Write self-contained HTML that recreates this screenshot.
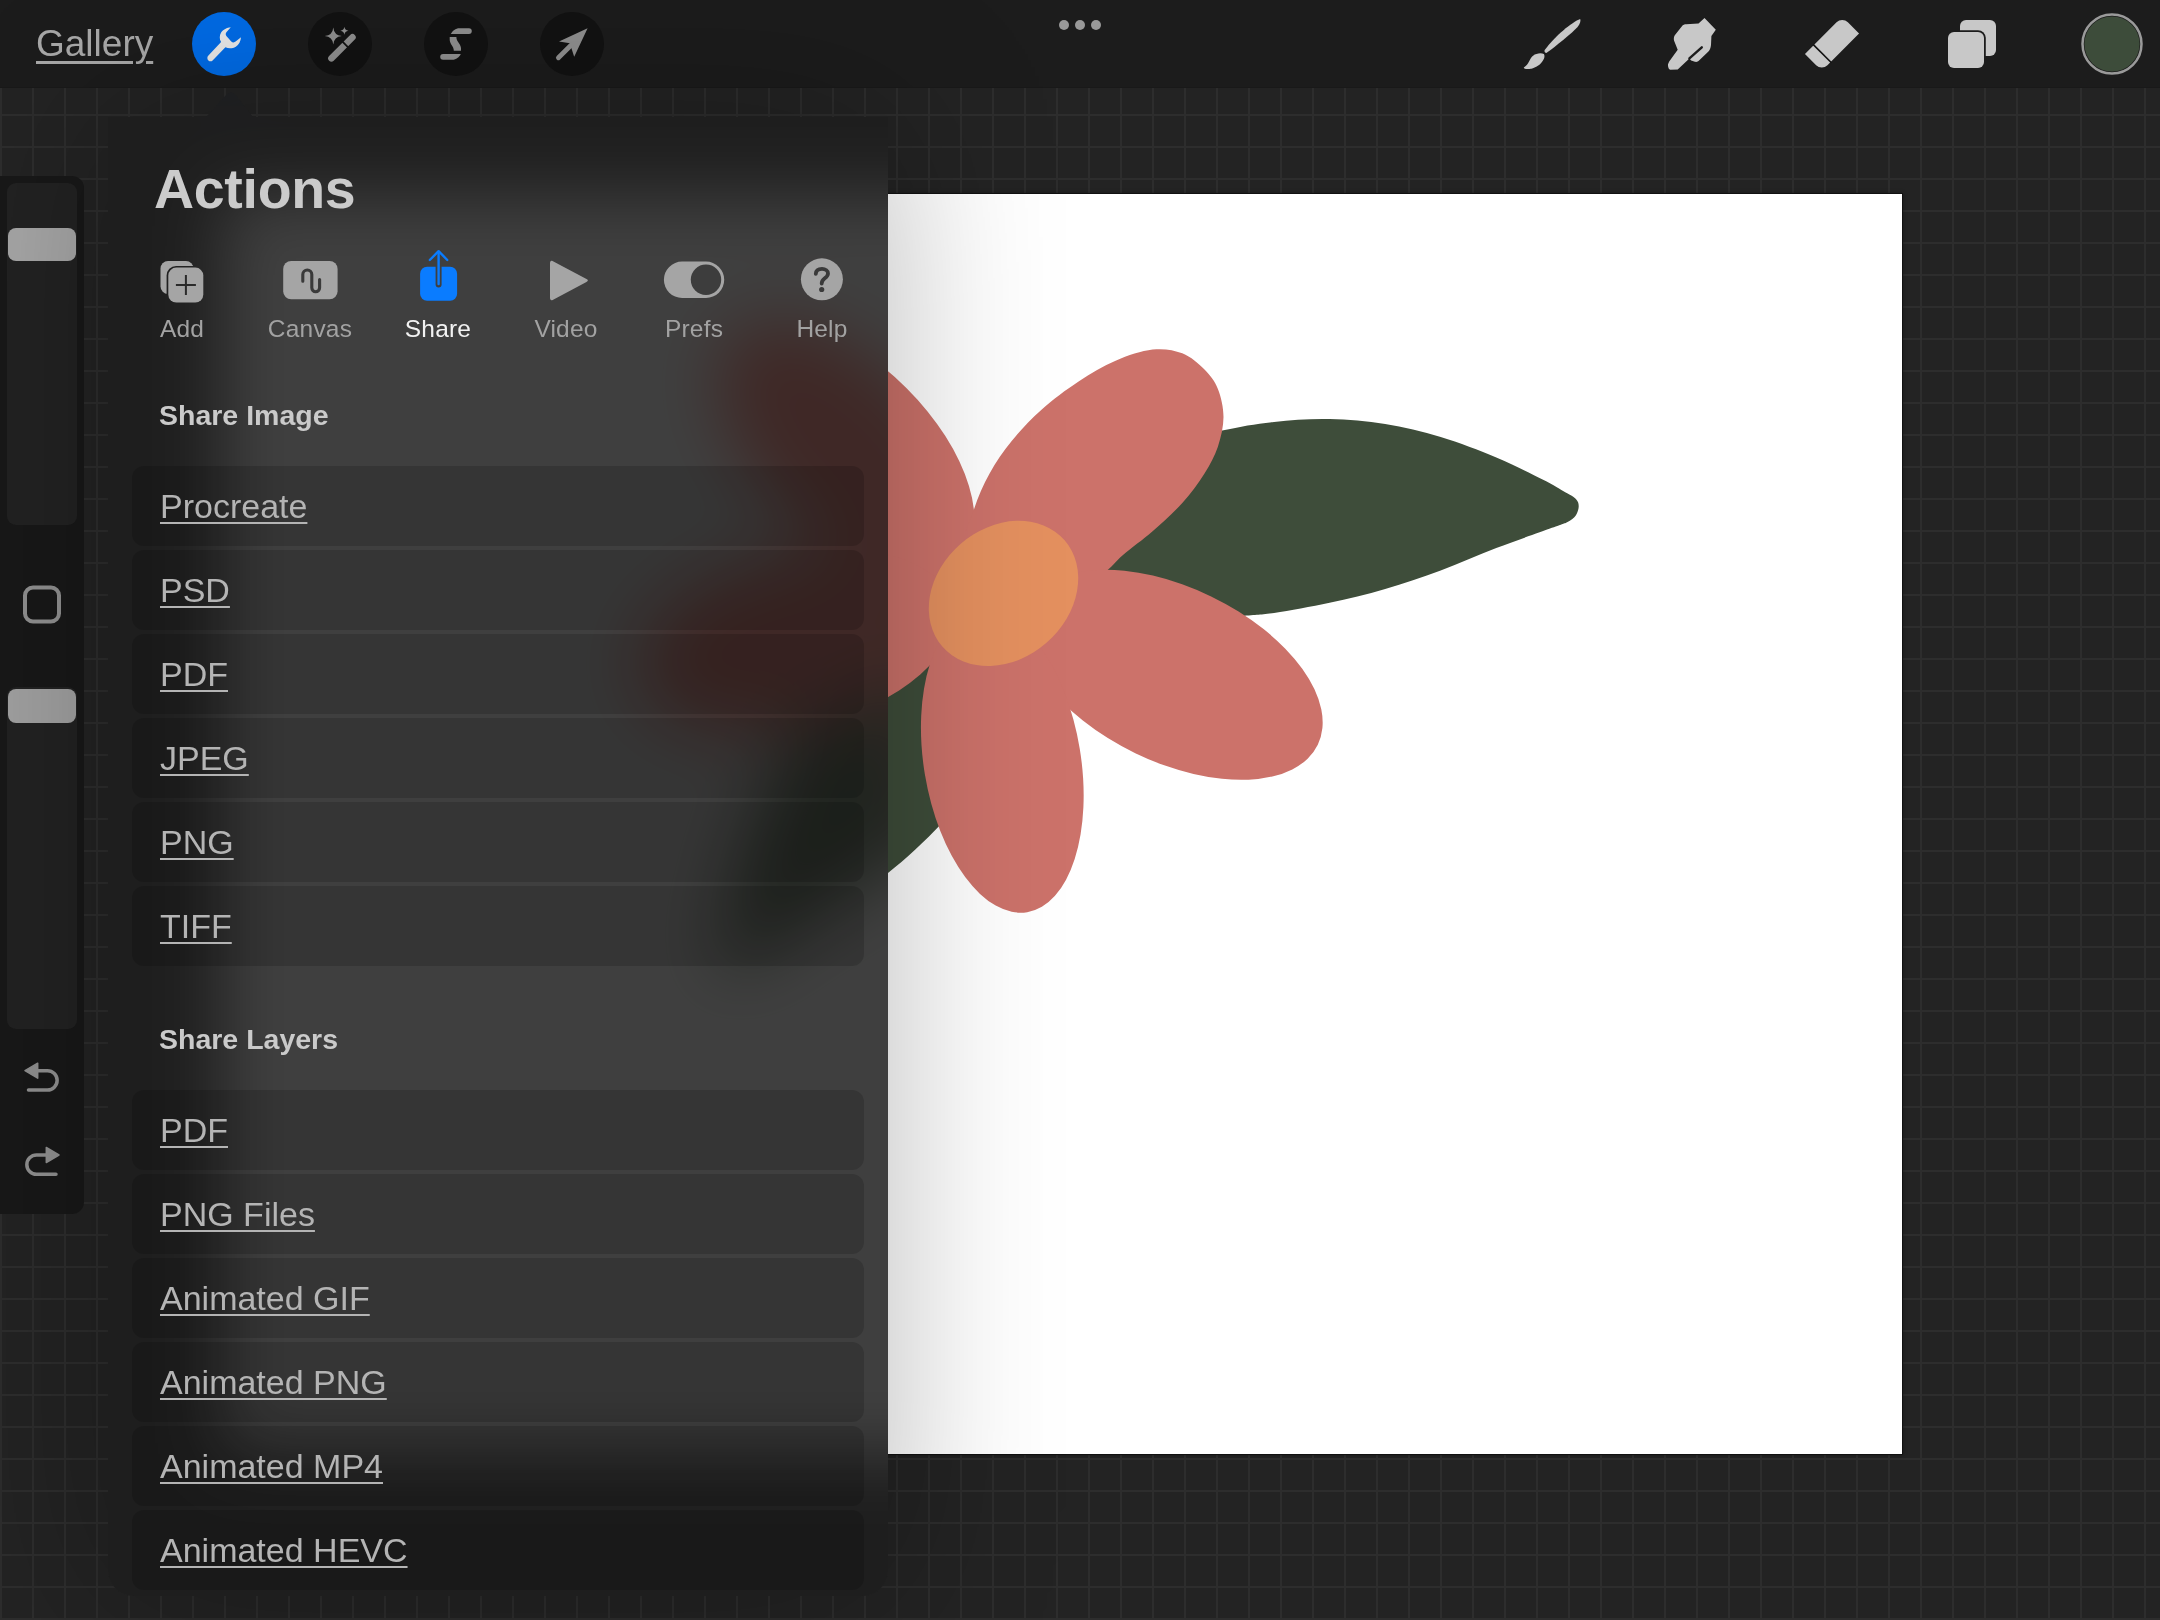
<!DOCTYPE html>
<html><head><meta charset="utf-8">
<style>
html,body{margin:0;padding:0;}
body{width:2160px;height:1620px;overflow:hidden;position:relative;background-color:#232323;
background-image:linear-gradient(to right,#2d2d2d 2px,transparent 2px),linear-gradient(to bottom,#2d2d2d 2px,transparent 2px);
background-size:32px 32px,32px 32px;background-position:0 0,0 18px;
font-family:"Liberation Sans",sans-serif;}
.abs{position:absolute;}
#toolbar,#panel{will-change:transform;}
#toolbar{left:0;top:0;width:2160px;height:87px;background:#1c1c1c;border-bottom:1px solid #191919;}
#canvas{left:222px;top:194px;width:1680px;height:1260px;background:#fff;box-shadow:0 0 0 1px #111,0 0 4px 1px rgba(0,0,0,0.35);overflow:hidden;}
#sidebar{left:0;top:176px;width:84px;height:1038px;background:#181818;border-radius:0 12px 12px 0;}
#panel{left:108px;top:91px;width:780px;height:1505px;overflow:hidden;border-radius:0 0 26px 26px;clip-path:polygon(0 26px,98px 26px,119px 3px,123px 1px,127px 3px,145px 26px,780px 26px,780px 100%,0 100%);}
#pshadow{left:108px;top:117px;width:780px;height:1479px;border-radius:0 0 26px 26px;box-shadow:0 0 170px rgba(0,0,0,0.28);}
#blur{left:-108px;top:-91px;width:2160px;height:1620px;filter:blur(34px) saturate(1.7);}
#ovl{left:0;top:0;width:780px;height:1505px;background:rgba(29,29,29,0.85);}
.row{position:absolute;left:24px;width:732px;height:80px;border-radius:12px;background:rgba(0,0,0,0.155);}
.row span{position:absolute;left:28px;top:0;line-height:80px;font-size:34px;color:#b4b4b4;text-decoration:underline;text-decoration-thickness:2px;text-underline-offset:4px;white-space:nowrap;}
.hdr{position:absolute;left:51px;font-size:28.5px;font-weight:700;color:#cacaca;white-space:nowrap;line-height:34px;}
.lbl{position:absolute;top:198px;width:140px;text-align:center;font-size:24.5px;letter-spacing:0.2px;color:#a2a2a2;line-height:28px;}
</style></head><body>

<div id="toolbar" class="abs">
  <div class="abs" style="left:36px;top:22px;font-size:37px;line-height:44px;color:#a8a8a8;text-decoration:underline;text-decoration-thickness:3px;text-underline-offset:5px;">Gallery</div>
  <svg class="abs" style="left:0;top:0" width="2160" height="88" viewBox="0 0 2160 88">
    <circle cx="224" cy="44" r="32" fill="#006be6"/>
    <circle cx="340" cy="44" r="32" fill="#121212"/>
    <circle cx="456" cy="44" r="32" fill="#121212"/>
    <circle cx="572" cy="44" r="32" fill="#121212"/>
    <!-- wrench -->
    <g transform="translate(192 12)" fill="#e8e8e8">
      <path d="M38.8,15.3 C35,15.5 31,17.8 29.1,20.5 C27.4,23.2 27.2,27 29.1,30 L16.2,43.8 C15,45 15.1,47.3 16.4,48.5 C17.7,49.7 19.6,49.6 20.6,48.5 L33.4,35.2 C36.5,36.7 40.5,36.6 43.8,34.7 C46.9,32.8 48.8,29 49,25.2 L43.6,29.6 C42.2,30.8 40.4,30.6 39.3,29.4 L34.6,24.3 C33.4,23 33.5,21.2 34.6,20 Z"/>
    </g>
    <!-- magic wand -->
    <g transform="translate(308 12)" fill="#8f8f8f">
      <line x1="23.4" y1="46.4" x2="44.5" y2="25.2" stroke="#8f8f8f" stroke-width="6.5" stroke-linecap="round"/>
      <line x1="33.5" y1="28.6" x2="41.4" y2="36.6" stroke="#121212" stroke-width="1.8"/>
      <path d="M25.3,15.6 Q26,23.4 33.8,24.1 Q26,24.8 25.3,32.6 Q24.6,24.8 16.8,24.1 Q24.6,23.4 25.3,15.6 Z"/>
      <path d="M36.4,14.7 Q36.8,18.3 40.4,18.7 Q36.8,19.1 36.4,22.7 Q36,19.1 32.4,18.7 Q36,18.3 36.4,14.7 Z"/>
    </g>
    <!-- selection S -->
    <g transform="translate(424 12)" fill="#8f8f8f">
      <path d="M26.8,22 C28.5,18.8 31.5,16.2 35.5,16.2 L44.9,16.2 A2.9,2.9 0 0 1 44.9,22 Z"/>
      <path d="M25.7,25 L32.4,25 C32.2,29.5 36.6,31.5 37,36 L37,38.8 L29.8,38.8 C30,34.5 25.6,32 25.7,27.5 Z"/>
      <path d="M36.8,41.9 C35.2,45 32.2,47.7 28.2,47.7 L19.1,47.7 A2.9,2.9 0 0 1 19.1,41.9 Z"/>
    </g>
    <!-- transform arrow -->
    <g transform="translate(540 12)" fill="#8f8f8f">
      <path d="M47.6,16.2 L19,29.5 L29.8,31.3 L34.2,44.7 Z"/>
      <line x1="18.4" y1="45.8" x2="31" y2="33.3" stroke="#8f8f8f" stroke-width="4.8" stroke-linecap="round"/>
    </g>
    <!-- dots -->
    <circle cx="1064" cy="25" r="5" fill="#999"/>
    <circle cx="1080" cy="25" r="5" fill="#999"/>
    <circle cx="1096" cy="25" r="5" fill="#999"/>
    <!-- brush -->
    <g fill="#c8c8c8">
      <path d="M1580.2,19 C1572,22 1555,36 1544.7,50.1 C1544,51.5 1545,53.2 1546.3,52.9 C1556,46 1572,33 1577.6,26.9 C1580,24 1581,20.5 1580.2,19 Z"/>
      <path d="M1543.9,54.1 C1541,52.6 1536,53.5 1533.1,55.7 C1530.6,57.6 1529.5,61 1528.2,63 C1527,65.3 1525,66.5 1523.8,67.4 C1523.5,68.6 1526,69.2 1527.5,69.1 C1531,69 1538,67.5 1542.3,61.4 C1544.5,58.5 1545,56 1543.9,54.1 Z"/>
    </g>
    <!-- smudge -->
    <g>
      <path fill="#c8c8c8" d="M1704.5,18 L1715.8,29.7 L1711.4,36.1 L1711,44.9 C1710.6,48 1709.8,50 1708.2,51.7 L1698.5,61 C1697,62 1696,62 1694.9,61.8 L1691.1,60.4 L1689.4,58.4 L1677.7,69.4 L1670.4,69.8 C1668.5,69.5 1667.8,66 1668,64.2 L1669.2,61.4 L1677.7,49.7 L1674,40.5 C1673.6,38.5 1674,36.5 1674.8,35.3 L1682.5,25.6 C1683.5,24.6 1685,24.2 1686.1,24.2 L1698.5,23.6 Z"/>
      <line x1="1689.4" y1="58.4" x2="1701.8" y2="47.3" stroke="#1c1c1c" stroke-width="2.4" stroke-linecap="round"/>
    </g>
    <!-- eraser -->
    <g transform="translate(1832 43.75) rotate(-45)">
      <path fill="#c8c8c8" d="M-26.35,-11.9 L18.35,-11.9 A8,8 0 0 1 26.35,-3.9 L26.35,11.9 L-18.35,11.9 A8,8 0 0 1 -26.35,3.9 Z"/>
      <line x1="-13.8" y1="-13" x2="-13.8" y2="13" stroke="#121212" stroke-width="1.6"/>
    </g>
    <!-- layers -->
    <mask id="laym"><rect x="1940" y="10" width="70" height="70" fill="#fff"/><rect x="1946.2" y="30.2" width="39.6" height="39.6" rx="7.8" fill="#000"/></mask>
    <rect x="1960" y="20" width="36" height="36" rx="6" fill="#c8c8c8" mask="url(#laym)"/>
    <rect x="1948" y="32" width="36" height="36" rx="6" fill="#c8c8c8"/>
    <!-- color -->
    <circle cx="2112" cy="44" r="29.5" fill="none" stroke="#9a9a9a" stroke-width="2.5"/>
    <circle cx="2112" cy="44" r="27.6" fill="#3d4c3a"/>
  </svg>
</div>

<div id="canvas" class="abs"><svg class="abs" style="left:0;top:0" width="1680" height="1260" viewBox="222 194 1680 1260"><defs><linearGradient id="cgrad" x1="0" y1="0" x2="1" y2="0"><stop offset="0" stop-color="#d7845a"/><stop offset="1" stop-color="#e58f60"/></linearGradient></defs><g>
<path fill="#3e4d3a" d="M1222.2,430.6 C1241.2,426.2 1256.2,423.8 1274.1,421.9 C1292.0,419.9 1311.1,418.7 1329.6,419.1 C1348.1,419.4 1366.7,421.1 1385.2,424.1 C1403.7,427.1 1422.2,431.5 1440.7,437.0 C1459.3,442.6 1479.3,450.3 1496.3,457.4 C1513.3,464.5 1531.0,473.8 1542.6,479.6 C1554.2,485.5 1560.2,489.4 1565.7,492.6 C1571.3,495.8 1573.8,496.8 1575.9,499.1 C1578.1,501.4 1578.8,503.7 1578.7,506.5 C1578.6,509.3 1577.4,513.2 1575.6,515.7 C1573.7,518.3 1571.5,519.8 1567.6,521.9 C1563.6,523.9 1563.7,523.4 1551.9,527.8 C1540.0,532.2 1514.8,541.0 1496.3,548.1 C1477.8,555.2 1459.3,563.6 1440.7,570.4 C1422.2,577.2 1403.7,583.5 1385.2,588.9 C1366.7,594.3 1348.1,598.8 1329.6,602.8 C1311.1,606.8 1289.5,610.6 1274.1,613.0 C1258.6,615.3 1257.7,614.2 1237.0,616.7 C1216.4,619.2 1179.5,625.8 1150.0,628.0 C1120.5,630.2 1080.0,638.0 1060.0,630.0 C1040.0,622.0 1026.7,600.8 1030.0,580.0 C1033.3,559.2 1058.3,527.0 1080.0,505.0 C1101.7,483.0 1136.3,460.4 1160.0,448.0 C1183.7,435.6 1203.2,434.9 1222.2,430.6 Z"/>
<path fill="#3e4d3a" d="M1010,610 C940,630 880,650 830,695 C780,745 740,830 722,955 C718,972 730,976 744,966 C800,925 850,895 888,873 C930,840 975,790 1010,740 Z"/>
<g fill="#cc726a">
<circle cx="1003" cy="593" r="80"/>
<ellipse cx="845.9" cy="449.1" rx="160" ry="86" transform="rotate(-135.1 845.9 449.1)"/>
<ellipse cx="796.4" cy="640.7" rx="160" ry="86" transform="rotate(167 796.4 640.7)"/>
<path d="M974.1,508.9 C978.2,496.2 983.3,484.7 989.6,473.4 C995.9,462.0 1003.2,451.4 1011.9,440.8 C1020.5,430.2 1030.4,419.5 1041.5,409.7 C1052.6,399.8 1066.2,389.6 1078.6,381.5 C1090.9,373.3 1103.3,366.1 1115.6,360.7 C1128.0,355.4 1141.5,350.9 1152.6,349.6 C1163.8,348.4 1173.6,350.0 1182.3,353.3 C1190.9,356.7 1198.6,363.7 1204.5,369.6 C1210.4,375.6 1214.7,381.0 1217.9,388.9 C1221.0,396.8 1223.5,407.4 1223.5,417.1 C1223.5,426.7 1221.0,437.3 1217.9,446.7 C1214.7,456.1 1210.4,464.0 1204.5,473.4 C1198.6,482.8 1190.9,493.4 1182.3,503.0 C1173.6,512.6 1162.5,522.5 1152.6,531.2 C1142.8,539.8 1131.4,547.7 1123.0,554.9 C1114.6,562.0 1112.8,566.6 1102.3,574.1 C1091.8,581.7 1077.0,597.4 1060.0,600.0 C1043.0,602.6 1015.8,598.3 1000.0,590.0 C984.2,581.7 969.3,563.5 965.0,550.0 C960.7,536.5 970.0,521.7 974.1,508.9 Z"/>
<ellipse cx="1173.2" cy="674.8" rx="160.6" ry="87.1" transform="rotate(25.8 1173.2 674.8)"/>
<ellipse cx="1002.3" cy="761.5" rx="152.7" ry="78.5" transform="rotate(80.6 1002.3 761.5)"/>
</g>
<ellipse cx="1003.5" cy="593.4" rx="81" ry="65.5" transform="rotate(-41 1003.5 593.4)" fill="#e4905f"/>
</g></svg></div>

<div id="sidebar" class="abs">
  <svg class="abs" style="left:0;top:0" width="84" height="1038" viewBox="0 176 84 1038">
    <rect x="7" y="183" width="70" height="342" rx="9" fill="#222"/>
    <rect x="8" y="228" width="68" height="33" rx="8" fill="#a6a6a6"/>
    <rect x="25" y="587.5" width="34" height="34" rx="8" fill="none" stroke="#8f8f8f" stroke-width="4"/>
    <rect x="7" y="687" width="70" height="342" rx="9" fill="#222"/>
    <rect x="8" y="689" width="68" height="34" rx="8" fill="#a0a0a0"/>
    <g fill="none" stroke="#8f8f8f" stroke-width="3.5" stroke-linecap="round">
      <path d="M28.5,1090 L47.5,1090 A9.65,9.65 0 0 0 47.5,1070.7 L36,1070.7"/>
      <path d="M56,1174.3 L36.5,1174.3 A9.65,9.65 0 0 1 36.5,1155 L48,1155"/>
    </g>
    <g fill="#8f8f8f">
      <path d="M25,1070.7 L37.7,1063.2 L37.7,1078.2 Z" stroke="#8f8f8f" stroke-width="1.5" stroke-linejoin="round"/>
      <path d="M59,1155 L46.3,1147.5 L46.3,1162.5 Z" stroke="#8f8f8f" stroke-width="1.5" stroke-linejoin="round"/>
    </g>
  </svg>
</div>

<div id="pshadow" class="abs"></div>
<div id="panel" class="abs">
  <div id="blur" class="abs"><div class="abs" style="left:-200px;top:-200px;width:2560px;height:2020px;background:#252525"></div><div class="abs" style="left:-200px;top:-200px;width:2560px;height:288px;background:#1c1c1c"></div>
<div class="abs" style="left:192px;top:12px;width:64px;height:64px;border-radius:50%;background:#1d3d66"></div>
<div class="abs" style="left:0;top:176px;width:84px;height:1038px;background:#181818"></div>
<svg class="abs" style="left:0;top:0" width="2160" height="1620" viewBox="0 0 2160 1620"><defs><linearGradient id="cgradb" x1="0" y1="0" x2="1" y2="0"><stop offset="0" stop-color="#d7845a"/><stop offset="1" stop-color="#e58f60"/></linearGradient></defs>
<rect x="222" y="194" width="1680" height="1260" fill="#fff"/>
<g>
<path fill="#3e4d3a" d="M1222.2,430.6 C1241.2,426.2 1256.2,423.8 1274.1,421.9 C1292.0,419.9 1311.1,418.7 1329.6,419.1 C1348.1,419.4 1366.7,421.1 1385.2,424.1 C1403.7,427.1 1422.2,431.5 1440.7,437.0 C1459.3,442.6 1479.3,450.3 1496.3,457.4 C1513.3,464.5 1531.0,473.8 1542.6,479.6 C1554.2,485.5 1560.2,489.4 1565.7,492.6 C1571.3,495.8 1573.8,496.8 1575.9,499.1 C1578.1,501.4 1578.8,503.7 1578.7,506.5 C1578.6,509.3 1577.4,513.2 1575.6,515.7 C1573.7,518.3 1571.5,519.8 1567.6,521.9 C1563.6,523.9 1563.7,523.4 1551.9,527.8 C1540.0,532.2 1514.8,541.0 1496.3,548.1 C1477.8,555.2 1459.3,563.6 1440.7,570.4 C1422.2,577.2 1403.7,583.5 1385.2,588.9 C1366.7,594.3 1348.1,598.8 1329.6,602.8 C1311.1,606.8 1289.5,610.6 1274.1,613.0 C1258.6,615.3 1257.7,614.2 1237.0,616.7 C1216.4,619.2 1179.5,625.8 1150.0,628.0 C1120.5,630.2 1080.0,638.0 1060.0,630.0 C1040.0,622.0 1026.7,600.8 1030.0,580.0 C1033.3,559.2 1058.3,527.0 1080.0,505.0 C1101.7,483.0 1136.3,460.4 1160.0,448.0 C1183.7,435.6 1203.2,434.9 1222.2,430.6 Z"/>
<path fill="#3e4d3a" d="M1010,610 C940,630 880,650 830,695 C780,745 740,830 722,955 C718,972 730,976 744,966 C800,925 850,895 888,873 C930,840 975,790 1010,740 Z"/>
<g fill="#cc726a">
<circle cx="1003" cy="593" r="80"/>
<ellipse cx="845.9" cy="449.1" rx="160" ry="86" transform="rotate(-135.1 845.9 449.1)"/>
<ellipse cx="796.4" cy="640.7" rx="160" ry="86" transform="rotate(167 796.4 640.7)"/>
<path d="M974.1,508.9 C978.2,496.2 983.3,484.7 989.6,473.4 C995.9,462.0 1003.2,451.4 1011.9,440.8 C1020.5,430.2 1030.4,419.5 1041.5,409.7 C1052.6,399.8 1066.2,389.6 1078.6,381.5 C1090.9,373.3 1103.3,366.1 1115.6,360.7 C1128.0,355.4 1141.5,350.9 1152.6,349.6 C1163.8,348.4 1173.6,350.0 1182.3,353.3 C1190.9,356.7 1198.6,363.7 1204.5,369.6 C1210.4,375.6 1214.7,381.0 1217.9,388.9 C1221.0,396.8 1223.5,407.4 1223.5,417.1 C1223.5,426.7 1221.0,437.3 1217.9,446.7 C1214.7,456.1 1210.4,464.0 1204.5,473.4 C1198.6,482.8 1190.9,493.4 1182.3,503.0 C1173.6,512.6 1162.5,522.5 1152.6,531.2 C1142.8,539.8 1131.4,547.7 1123.0,554.9 C1114.6,562.0 1112.8,566.6 1102.3,574.1 C1091.8,581.7 1077.0,597.4 1060.0,600.0 C1043.0,602.6 1015.8,598.3 1000.0,590.0 C984.2,581.7 969.3,563.5 965.0,550.0 C960.7,536.5 970.0,521.7 974.1,508.9 Z"/>
<ellipse cx="1173.2" cy="674.8" rx="160.6" ry="87.1" transform="rotate(25.8 1173.2 674.8)"/>
<ellipse cx="1002.3" cy="761.5" rx="152.7" ry="78.5" transform="rotate(80.6 1002.3 761.5)"/>
</g>
<ellipse cx="1003.5" cy="593.4" rx="81" ry="65.5" transform="rotate(-41 1003.5 593.4)" fill="#e4905f"/>
</g></svg></div>
  <div id="ovl" class="abs"></div>
  <div class="abs" style="left:0;top:26px;width:780px;height:1477px;">
  <div class="abs" style="left:46px;top:42px;font-size:55.5px;font-weight:700;color:#cbcbcb;line-height:60px;letter-spacing:-0.3px;">Actions</div>
  <svg class="abs" style="left:0;top:0" width="780" height="230" viewBox="108 117 780 230">
    <!-- Add -->
    <g>
      <mask id="addm"><rect x="150" y="250" width="70" height="70" fill="#fff"/><rect x="166.6" y="265.9" width="38.4" height="38.4" rx="9.5" fill="#000"/></mask>
      <rect x="160.5" y="261" width="33" height="33" rx="7.5" fill="#a5a5a5" mask="url(#addm)"/>
      <rect x="168.3" y="267.6" width="35" height="35" rx="8" fill="#a5a5a5"/>
      <path d="M175.9,285 H195.9 M185.9,275 V295" stroke="#2a2a2a" stroke-width="2" fill="none"/>
    </g>
    <!-- Canvas -->
    <g>
      <rect x="283.2" y="261" width="54.4" height="38.3" rx="8" fill="#a5a5a5"/>
      <path d="M302.8,281.2 V274.5 A4.5,4.5 0 0 1 311.8,274.5 V287.8 A3.9,3.9 0 0 0 319.6,287.8 V279.5" stroke="#3a3a3a" stroke-width="3.1" fill="none" stroke-linecap="round"/>
    </g>
    <!-- Share -->
    <g>
      <mask id="shm"><rect x="400" y="240" width="80" height="80" fill="#fff"/><line x1="438.6" y1="240" x2="438.6" y2="284.5" stroke="#000" stroke-width="6" stroke-linecap="round"/></mask>
      <rect x="420.1" y="266.7" width="37" height="34.1" rx="7" fill="#0a7cff" mask="url(#shm)"/>
      <line x1="438.6" y1="252" x2="438.6" y2="284" stroke="#0a7cff" stroke-width="2.4" stroke-linecap="round"/>
      <path d="M429.8,260 L438.6,251.2 L447.3,260" stroke="#0a7cff" stroke-width="2.4" fill="none" stroke-linecap="round" stroke-linejoin="round"/>
    </g>
    <!-- Video -->
    <path d="M552.5,261 C550.8,260.2 550,261.5 550,263.5 V297.8 C550,299.8 551,300.9 552.7,300 L586,282.3 C588.5,281 588.5,280 586,278.8 Z" fill="#a5a5a5"/>
    <!-- Prefs -->
    <rect x="663.9" y="261.6" width="60.3" height="36.4" rx="18.2" fill="#a5a5a5"/>
    <circle cx="706" cy="279.8" r="15.2" fill="#3d3d3d"/>
    <!-- Help -->
    <circle cx="821.9" cy="279.3" r="21" fill="#a5a5a5"/>
    <path d="M815.8,273.9 C816,270.6 818.5,268.9 822,268.9 C825.5,268.9 828,271 828,273.4 C828,275.8 826.5,277 824.5,278.5 C822.5,280 821.7,281.3 821.7,283.6" stroke="#3a3a3a" stroke-width="3.8" fill="none" stroke-linecap="round"/><circle cx="821.7" cy="289.5" r="2.6" fill="#3a3a3a"/>
  </svg>
  <div class="lbl" style="left:4px;">Add</div>
  <div class="lbl" style="left:132px;">Canvas</div>
  <div class="lbl" style="left:260px;color:#f2f2f2;">Share</div>
  <div class="lbl" style="left:388px;">Video</div>
  <div class="lbl" style="left:516px;">Prefs</div>
  <div class="lbl" style="left:644px;">Help</div>

  <div class="hdr" style="top:281px;">Share Image</div>
  <div class="row" style="top:349px;"><span>Procreate</span></div>
  <div class="row" style="top:433px;"><span>PSD</span></div>
  <div class="row" style="top:517px;"><span>PDF</span></div>
  <div class="row" style="top:601px;"><span>JPEG</span></div>
  <div class="row" style="top:685px;"><span>PNG</span></div>
  <div class="row" style="top:769px;"><span>TIFF</span></div>

  <div class="hdr" style="top:905px;">Share Layers</div>
  <div class="row" style="top:973px;"><span>PDF</span></div>
  <div class="row" style="top:1057px;"><span>PNG Files</span></div>
  <div class="row" style="top:1141px;"><span>Animated GIF</span></div>
  <div class="row" style="top:1225px;"><span>Animated PNG</span></div>
  <div class="row" style="top:1309px;"><span>Animated MP4</span></div>
  <div class="row" style="top:1393px;"><span>Animated HEVC</span></div>
</div>

</div>

</body></html>
